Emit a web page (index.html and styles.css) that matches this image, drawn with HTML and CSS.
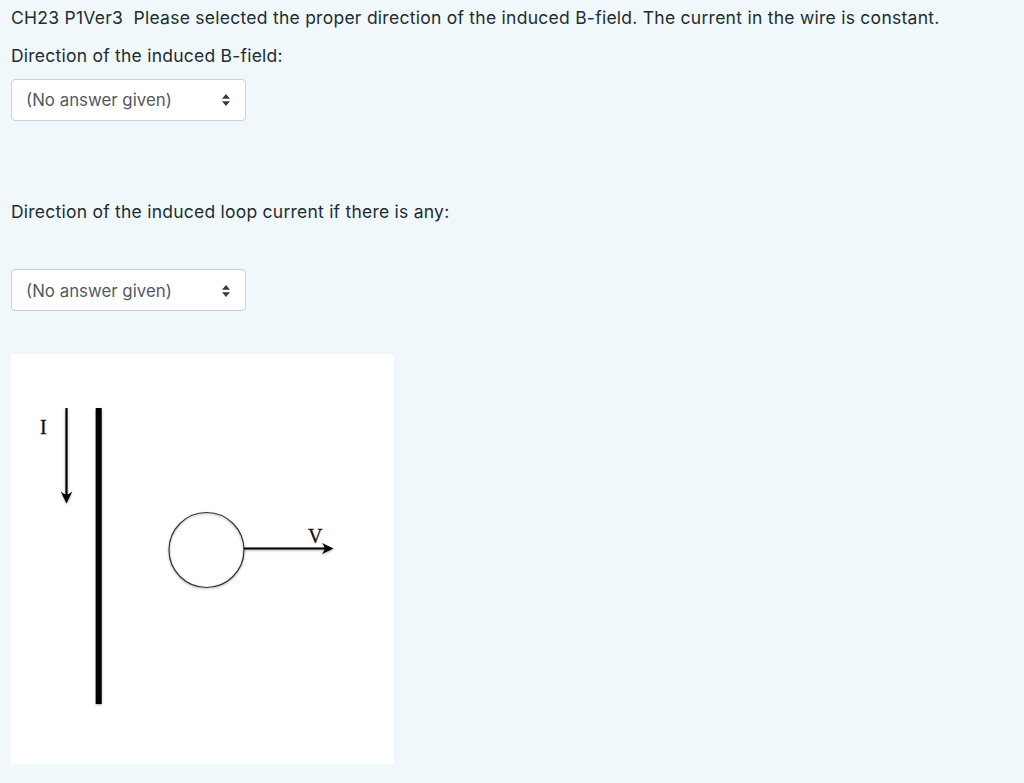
FILE: index.html
```html
<!DOCTYPE html>
<html lang="en">
<head>
<meta charset="utf-8">
<title>CH23 P1Ver3</title>
<link rel="stylesheet" href="styles.css">
</head>
<body>
<main class="question">
  <p class="prompt">CH23 P1Ver3&nbsp; Please selected the proper direction of the induced B-field. The current in the wire is constant.</p>
  <p class="label label-field">Direction of the induced B-field:</p>
  <div class="select" role="combobox" tabindex="0">
    <span>(No answer given)</span>
    <svg class="caret" viewBox="0 0 8 12"><path d="M0 4.700L4 0L8 4.700ZM0 7.300H8L4 12Z"/></svg>
  </div>
  <p class="label label-current">Direction of the induced loop current if there is any:</p>
  <div class="select select-current" role="combobox" tabindex="0">
    <span>(No answer given)</span>
    <svg class="caret" viewBox="0 0 8 12"><path d="M0 4.700L4 0L8 4.700ZM0 7.300H8L4 12Z"/></svg>
  </div>
  <svg class="diagram" width="383" height="410" viewBox="11 354 383 410">
    <g class="ink">
      <path d="M66.500 408V498" stroke-width="2.200"/>
      <path class="head" d="M66.500 503.500L60.700 491.500Q66.500 497 72.300 491.500Z"/>
      <path d="M98.700 408V704" stroke-width="6"/>
      <circle class="loop" cx="206.500" cy="550" r="37.500" stroke-width="1.200"/>
      <path d="M244 548.500H328" stroke-width="2.200"/>
      <path class="head" d="M333.500 548.500L322 543Q327 548.500 322 554Z"/>
    </g>
    <text x="40" y="433.500">I</text>
    <text x="308" y="542.500">V</text>
  </svg>
</main>
</body>
</html>
```
FILE: styles.css
```css
body {
  margin: 0;
  background: #f0f8fc;
  color: #1d2d31;
  font: 17.5px/28px Inter, "Liberation Sans", sans-serif;
}
.question {
  display: flex;
  flex-direction: column;
  align-items: flex-start;
  padding: 4px 11px;
}
p { margin: 0; white-space: nowrap; }
.prompt { letter-spacing: 0.26px; }
.label { letter-spacing: 0.235px; }
.label-field { margin: 10px 0 9px; }
.label-current { margin: 77px 0 43px; }
.select {
  display: flex;
  align-items: center;
  justify-content: space-between;
  box-sizing: border-box;
  width: 235px;
  height: 42px;
  padding: 0 15px 0 14px;
  border: 1px solid #c9d0d6;
  border-radius: 4px;
  background: #fff;
  color: #52585f;
  font-size: 16.85px;
}
.select-current { padding-top: 1px; }
.caret { width: 8px; height: 12px; overflow: visible; fill: #343a40; }
.diagram { margin-top: 43px; background: #fff; }
.ink { fill: none; stroke: #000; filter: drop-shadow(0 1px 1px rgba(0, 0, 0, 0.35)); }
.head { fill: #000; stroke: none; }
.loop { stroke: #333; }
.diagram text { font: 20px "Liberation Serif", serif; fill: #111; stroke: #111; stroke-width: 0.3px; }
```
